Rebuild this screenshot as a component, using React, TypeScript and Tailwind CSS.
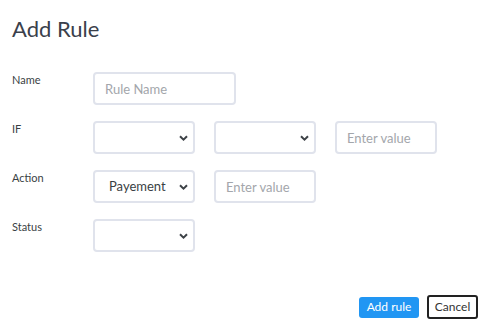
import React from 'react';

const font = { fontFamily: 'Lato, "Open Sans", sans-serif' };

function Chevron() {
  return (
    <svg
      width="9"
      height="6"
      viewBox="0 0 9 6"
      className="pointer-events-none absolute right-[5px] top-1/2 -translate-y-1/2"
    >
      <path d="M1 1.2 L4.5 4.6 L8 1.2" fill="none" stroke="#3d4247" strokeWidth="2" />
    </svg>
  );
}

function Select({ value }: { value?: string }) {
  return (
    <div className="relative w-[102px] h-[33px] rounded-[4px] border-2 border-[#e0e3ec] bg-white">
      <div className="h-full flex items-center pl-[14px] text-[13px] text-[#3a3f44]">{value}</div>
      <Chevron />
    </div>
  );
}

function Input({ placeholder, width }: { placeholder: string; width: string }) {
  return (
    <input
      placeholder={placeholder}
      className={`${width} h-[33px] rounded-[4px] border-2 border-[#e0e3ec] bg-white px-[10px] text-[13px] text-[#333] placeholder:text-[#a3a6ab] outline-none`}
      style={font}
    />
  );
}

export default function App() {
  const rows = [
    {
      label: 'Name',
      fields: <Input placeholder="Rule Name" width="w-[143px]" />,
    },
    {
      label: 'IF',
      fields: (
        <>
          <Select />
          <Select />
          <Input placeholder="Enter value" width="w-[102px]" />
        </>
      ),
    },
    {
      label: 'Action',
      fields: (
        <>
          <Select value="Payement" />
          <Input placeholder="Enter value" width="w-[102px]" />
        </>
      ),
    },
    { label: 'Status', fields: <Select /> },
  ];

  return (
    <div className="w-[493px] h-[333px] bg-white flex flex-col pl-3 pt-[15px]" style={font}>
      <h1 className="text-[22px] leading-[28px] text-[#3a404b] font-normal">Add Rule</h1>

      <div className="mt-[29px] flex flex-col gap-4">
        {rows.map((row) => (
          <div key={row.label} className="flex">
            <span className="w-[81px] text-[11px] leading-4 text-[#3a3f44]">{row.label}</span>
            <div className="flex gap-[19px]">{row.fields}</div>
          </div>
        ))}
      </div>

      <div className="mt-auto mb-[14px] mr-[15px] flex justify-end items-center gap-[8px]">
        <button className="w-[60px] h-[21px] rounded-[3px] bg-[#2196f3] text-white text-[12px] leading-none">
          Add rule
        </button>
        <button className="w-[51px] h-[24px] rounded-[3px] border-2 border-[#222] bg-white text-[#333] text-[12px] leading-none">
          Cancel
        </button>
      </div>
    </div>
  );
}
